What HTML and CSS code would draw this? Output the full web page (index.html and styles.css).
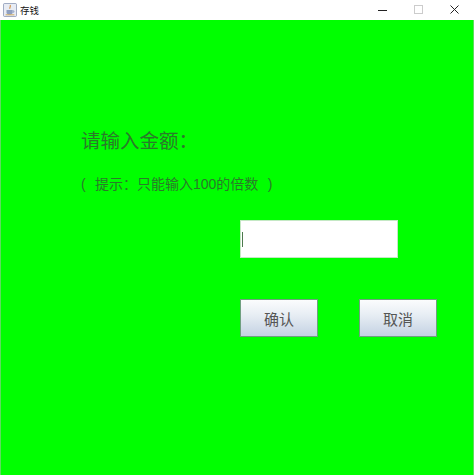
FILE: index.html
```html
<!DOCTYPE html>
<html>
<head>
  <title>存钱</title>
  <meta charset="UTF-8">
  <link rel="stylesheet" href="styles.css">
</head>
<body>
  <div class="window">
    <div class="title-bar">
      <div class="title-left">
        <svg class="app-icon" width="14" height="14" viewBox="0 0 16 16">
          <rect x="0.5" y="0.5" width="15" height="15" rx="1.5" fill="#e8ecf4" stroke="#8f9db8"/>
          <path d="M8 2.500c1.500 1.500-1 2.500 0 4" fill="none" stroke="#d08a3a" stroke-width="1.200"/>
          <path d="M4 8h7v3c0 1.500-1.500 2-3.500 2S4 12.500 4 11z" fill="#8fa0c0"/>
          <path d="M11 9h1.500v1.500H11" fill="none" stroke="#8fa0c0"/>
          <path d="M3 13.500h10" stroke="#c9a24a" stroke-width="1"/>
        </svg>
        <span class="title-text">存钱</span>
      </div>
      <div class="window-controls">
        <svg class="control" width="10" height="10" viewBox="0 0 10 10"><path d="M0 5.500h9" stroke="#222" stroke-width="1"/></svg>
        <svg class="control" width="10" height="10" viewBox="0 0 10 10"><rect x="0.500" y="0.500" width="8" height="8" fill="none" stroke="#ccc"/></svg>
        <svg class="control" width="10" height="10" viewBox="0 0 10 10"><path d="M0.500 0.500l8 8M8.500 0.500l-8 8" stroke="#222" stroke-width="1"/></svg>
      </div>
    </div>
    <div class="content">
      <div class="heading">请输入金额：</div>
      <div class="hint"><span class="paren">(</span>提示：只能输入100的倍数<span class="paren close">)</span></div>
      <div class="form">
        <div class="amount-input"><span class="caret"></span></div>
        <div class="actions">
          <button class="btn">确认</button>
          <button class="btn">取消</button>
        </div>
      </div>
    </div>
  </div>
</body>
</html>
```

FILE: styles.css
```css
body {
  margin: 0;
  padding: 0;
  font-family: "Liberation Sans", "Noto Sans CJK SC", sans-serif;
  background-color: #00ff00;
}

.window {
  width: 474px;
  height: 475px;
  display: flex;
  flex-direction: column;
  overflow: hidden;
}

.title-bar {
  height: 20px;
  flex-shrink: 0;
  background-color: #ffffff;
  display: flex;
  justify-content: space-between;
  align-items: center;
  padding: 0 0 0 3px;
}

.title-left {
  display: flex;
  align-items: center;
}

.app-icon {
  margin-right: 3px;
}

.title-text {
  font-size: 9.5px;
  color: #111111;
}

.window-controls {
  display: flex;
  align-items: center;
  gap: 26px;
  padding-right: 14px;
}

.content {
  flex-grow: 1;
  background-color: #00ff00;
  padding: 109px 0 0 81px;
  border-left: 1px solid #5fdc5f;
  border-right: 1px solid #5fdc5f;
  box-sizing: border-box;
}

.heading {
  font-size: 19.5px;
  line-height: 24px;
  color: #2a7a2a;
  margin-left: -1px;
}

.hint {
  font-size: 14px;
  line-height: 18px;
  color: #2a7a2a;
  margin-top: 22px;
  margin-left: -1px;
  display: flex;
}

.paren {
  width: 14px;
}

.paren.close {
  text-align: right;
}

.form {
  margin-left: 158px;
  margin-top: 27px;
}

.amount-input {
  width: 158px;
  height: 38px;
  box-sizing: border-box;
  background-color: #ffffff;
  border: 1px solid #c4e8c4;
  display: flex;
  align-items: center;
  padding-left: 1px;
}

.caret {
  width: 1px;
  height: 15px;
  background-color: #4d7a4d;
}

.actions {
  display: flex;
  gap: 41px;
  margin-top: 41px;
}

.btn {
  width: 78px;
  height: 38px;
  padding: 0;
  border: 1px solid #6f9f80;
  background: linear-gradient(to bottom, #fbfcfd, #e8eef4 40%, #c4d2e3);
  font-family: inherit;
  font-size: 15px;
  color: #555555;
}
```
